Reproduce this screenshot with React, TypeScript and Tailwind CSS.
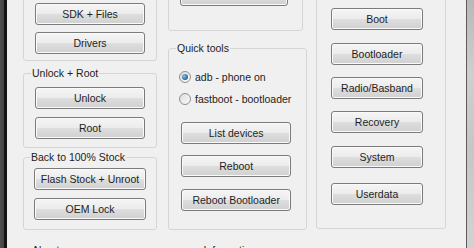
import React from 'react';

function Btn({ children, className = '' }: { children?: React.ReactNode; className?: string }) {
  return (
    <button
      className={`flex h-[22px] w-full items-center justify-center whitespace-nowrap rounded-[3px] border border-[#7b7b7b] bg-[linear-gradient(to_bottom,#f5f5f5_0%,#ececec_48%,#dedede_52%,#d0d0d0_100%)] shadow-[inset_0_0_0_1px_#fafafa] leading-none text-[#1e1e1e] ${className}`}
    >
      {children}
    </button>
  );
}

function Radio({ checked, label, className = '' }: { checked?: boolean; label: string; className?: string }) {
  return (
    <label className={`flex h-[16px] items-center gap-[4px] whitespace-nowrap ${className}`}>
      <span className="flex h-[12px] w-[12px] shrink-0 items-center justify-center rounded-full border border-[#8e8f8f] bg-[linear-gradient(to_bottom_right,#dcdcdc,#fbfbfb)]">
        {checked && (
          <span className="h-[6px] w-[6px] rounded-full bg-[radial-gradient(circle_at_35%_35%,#8cc0ea,#2c628b_70%)]" />
        )}
      </span>
      <span className="leading-[16px]">{label}</span>
    </label>
  );
}

export default function App() {
  return (
    <div className="flex h-[248px] w-[474px] overflow-hidden bg-[#f0f0f0] font-['Liberation_Sans',Arial,sans-serif] text-[10.5px] text-[#222]">
      {/* left window edge */}
      <div className="w-[7px] shrink-0 bg-[linear-gradient(to_right,#505050_0px,#444_4px,#141414_4px,#141414_7px)]" />

      <div className="flex min-w-0 flex-1 flex-col">
        <div className="flex items-start pl-[16px]">
          {/* left column */}
          <div className="flex w-[134px] shrink-0 flex-col">
            <div className="-mt-[20px] rounded-[3px] border border-[#d5d5d5] px-[11px] pt-[22px] pb-[6px]">
              <Btn>SDK + Files</Btn>
              <Btn className="mt-[7px]">Drivers</Btn>
            </div>
            <fieldset className="mt-[5px] rounded-[3px] border border-[#d5d5d5]">
              <legend className="ml-[7px] px-[1px] leading-[14px]">Unlock + Root</legend>
              <div className="px-[11px] pt-[7px] pb-[8px]">
                <Btn>Unlock</Btn>
                <Btn className="mt-[8px]">Root</Btn>
              </div>
            </fieldset>
            <fieldset className="mt-[2px] rounded-[3px] border border-[#d5d5d5]">
              <legend className="ml-[6px] px-[1px] leading-[14px]">Back to 100% Stock</legend>
              <div className="px-[10px] pt-[4px] pb-[9px]">
                <Btn>Flash Stock + Unroot</Btn>
                <Btn className="mt-[8px]">OEM Lock</Btn>
              </div>
            </fieldset>
          </div>

          {/* middle column */}
          <div className="ml-[11px] flex w-[135px] shrink-0 flex-col">
            <div className="-mt-[24px] rounded-[3px] border border-[#d5d5d5] pt-[7px] pr-[14px] pb-[24px] pl-[11px]">
              <Btn />
            </div>
            <fieldset className="mt-[10px] rounded-[3px] border border-[#d5d5d5]">
              <legend className="ml-[7px] px-[1px] leading-[14px]">Quick tools</legend>
              <div className="pt-[14px] pr-[15px] pb-[18px] pl-[10px]">
                <Radio checked label="adb - phone on" />
                <Radio label="fastboot - bootloader" className="mt-[6px]" />
                <div className="pl-[2px]">
                  <Btn className="mt-[15px]">List devices</Btn>
                  <Btn className="mt-[11px]">Reboot</Btn>
                  <Btn className="mt-[12px]">Reboot Bootloader</Btn>
                </div>
              </div>
            </fieldset>
          </div>

          {/* right column */}
          <div className="ml-[13px] flex w-[130px] shrink-0 flex-col">
            <div className="-mt-[20px] rounded-[3px] border border-[#d5d5d5] pt-[27px] pr-[22px] pb-[23px] pl-[14px]">
              <Btn>Boot</Btn>
              <Btn className="mt-[13px]">Bootloader</Btn>
              <Btn className="mt-[12px]">Radio/Basband</Btn>
              <Btn className="mt-[12px]">Recovery</Btn>
              <Btn className="mt-[13px]">System</Btn>
              <Btn className="mt-[15px]">Userdata</Btn>
            </div>
          </div>
        </div>

        <div className="mt-[13px] flex leading-[14px]">
          <span className="ml-[25px]">About</span>
          <span className="ml-[144px]">Information</span>
        </div>
      </div>

      {/* right window edge */}
      <div className="w-[8px] shrink-0 border-l border-[#5c5c5c] bg-[linear-gradient(to_bottom,#b8b8b8,#cfcfcf_30%,#c6c6c6_60%,#d2d2d2)]" />
    </div>
  );
}
